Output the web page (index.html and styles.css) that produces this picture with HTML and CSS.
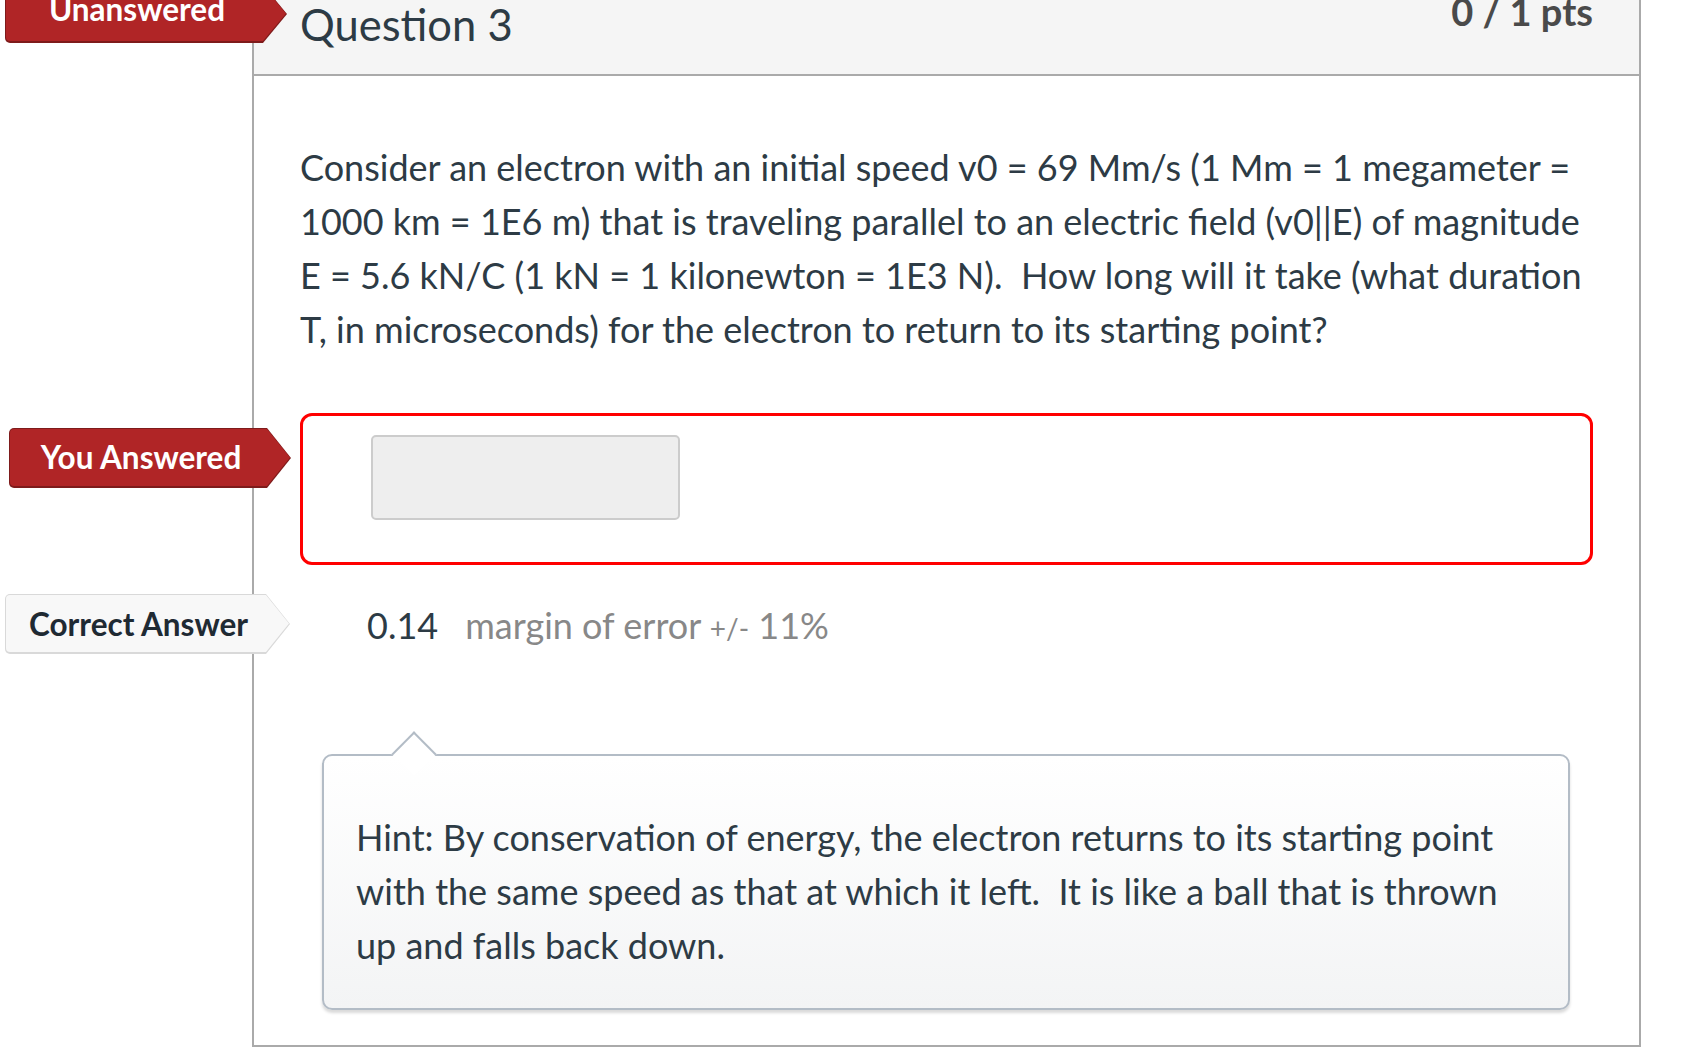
FILE: index.html
```html
<!DOCTYPE html>
<html lang="en">
<head>
<meta charset="utf-8">
<title>Question 3</title>
<link rel="stylesheet" href="styles.css">
</head>
<body>
<div class="question">
  <div class="q-header">
    <div class="flag flag-red flag-status">Unanswered</div>
    <h2 class="q-name">Question 3</h2>
    <div class="q-points">0 / 1 pts</div>
  </div>
  <div class="q-body">
    <div class="q-text">Consider an electron with an initial speed v0 = 69 Mm/s (1 Mm = 1 megameter = 1000 km = 1E6 m) that is traveling parallel to an electric field (v0||E) of magnitude E = 5.6 kN/C (1 kN = 1 kilonewton = 1E3 N).&nbsp; How long will it take (what duration T, in microseconds) for the electron to return to its starting point?</div>

    <div class="answer-row answer-you">
      <div class="flag flag-red flag-you">You Answered</div>
      <div class="answer-box">
        <div class="answer-input"></div>
      </div>
    </div>

    <div class="answer-row answer-correct">
      <div class="flag flag-light flag-correct">Correct Answer</div>
      <span class="answer-value">0.14</span>
      <span class="answer-margin">margin of error <span class="pm">+/-</span> 11%</span>
    </div>

    <div class="hint">Hint: By conservation of energy, the electron returns to its starting point with the same speed as that at which it left.&nbsp; It is like a ball that is thrown up and falls back down.</div>
  </div>
</div>
</body>
</html>
```

FILE: styles.css
```css
* { box-sizing: border-box; }

html, body {
  margin: 0;
  padding: 0;
  background: #ffffff;
}

body {
  font-family: "Lato", "Open Sans", sans-serif;
  color: #2d3b45;
  overflow: hidden;
  height: 1062px;
}

.question {
  position: relative;
  margin: -20px 0 0 252px;
  width: 1389px;
  border: 2px solid #aaaaaa;
}

.q-header {
  position: relative;
  height: 94px;
  background: #f5f5f5;
  border-bottom: 2px solid #aaaaaa;
  display: flex;
  justify-content: space-between;
  align-items: flex-start;
  padding: 0 46px;
}

.q-name {
  margin: 16px 0 0 0;
  font-size: 43.5px;
  line-height: 1.2;
  font-weight: 400;
  color: #2d3b45;
}

.q-points {
  margin-top: 7px;
  font-size: 38px;
  line-height: 1.2;
  font-weight: 700;
  color: #4a4a4a;
}

/* flags */
.flag {
  position: absolute;
  height: 58px;
  line-height: 58px;
  font-size: 31.5px;
  font-weight: 700;
  text-align: center;
  padding: 0 24px 0 6px;
  white-space: nowrap;
  z-index: 2;
  clip-path: polygon(0 0, calc(100% - 24px) 0, 100% 50%, calc(100% - 24px) 100%, 0 100%);
  border-radius: 5px 0 0 5px;
}

.flag::before {
  content: "";
  position: absolute;
  inset: 1px 1px 2px 1px;
  z-index: -1;
  border-radius: 4px 0 0 4px;
  clip-path: polygon(0 0, calc(100% - 23px) 0, 100% 50%, calc(100% - 23px) 100%, 0 100%);
}

.flag-red {
  background: #7e1b1b;
  color: #ffffff;
}
.flag-red::before { background: #b02526; }

.flag-light {
  background: #d9d9d9;
  color: #1f2a33;
}
.flag-light::before { background: #f8f8f8; }

.flag-status {
  left: -249px;
  top: 3px;
  width: 282px;
  line-height: 48px;
  padding-bottom: 10px;
}

.flag-you {
  left: -291px;
  top: 15px;
  width: 282px;
  height: 60px;
  line-height: 58px;
}

.flag-correct {
  left: -295px;
  top: 0;
  width: 285px;
  height: 60px;
  line-height: 60px;
}

/* body */
.q-body {
  padding: 64px 46px 35px 46px;
}

.q-text {
  font-size: 36px;
  line-height: 54px;
}

.answer-row {
  position: relative;
}

.answer-you {
  margin-top: 57px;
}

.answer-box {
  height: 152px;
  border: 3px solid #ff0000;
  border-radius: 12px;
  padding: 19px 0 0 68px;
}

.answer-input {
  width: 309px;
  height: 85px;
  background: #eeeeee;
  border: 2px solid #cccccc;
  border-radius: 5px;
}

.answer-correct {
  margin-top: 29px;
  height: 60px;
  padding: 2px 0 0 67px;
  line-height: 58px;
  white-space: nowrap;
}

.answer-value {
  font-size: 36px;
  color: #2d3b45;
  margin-right: 23px;
}

.answer-margin {
  font-size: 36px;
  color: #888888;
}

.answer-margin .pm {
  font-size: 28px;
}

.hint {
  position: relative;
  margin: 100px 23px 0 22px;
  border: 2px solid #b3bcc6;
  border-radius: 10px;
  padding: 54px 32px 36px 32px;
  background: linear-gradient(#ffffff, #f3f4f5);
  box-shadow: 0 3px 3px rgba(0, 0, 0, 0.15);
  font-size: 36px;
  line-height: 54px;
  color: #2d3b45;
}

.hint::before {
  content: "";
  position: absolute;
  left: 74px;
  top: -18px;
  width: 30px;
  height: 30px;
  background: #ffffff;
  border-top: 2px solid #b3bcc6;
  border-left: 2px solid #b3bcc6;
  transform: rotate(45deg);
}
```
